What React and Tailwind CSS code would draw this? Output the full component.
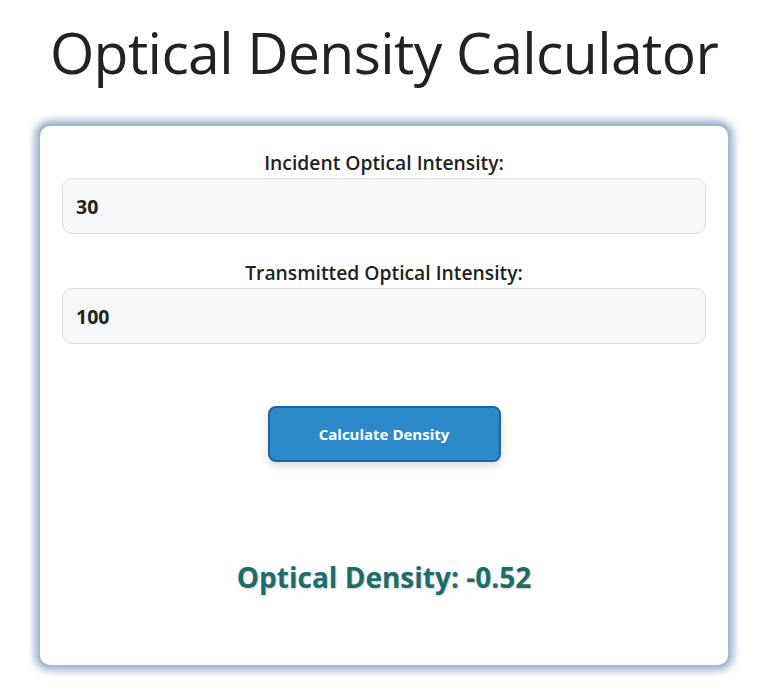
import React, { useState } from 'react';

const App = () => {
  const [incident, setIncident] = useState('30');
  const [transmitted, setTransmitted] = useState('100');
  const [density, setDensity] = useState(-0.52);

  const calculate = () => {
    const i0 = parseFloat(incident);
    const i = parseFloat(transmitted);
    if (i0 > 0 && i > 0) setDensity(Math.log10(i0 / i));
  };

  return (
    <div className="min-h-screen bg-white font-['Open_Sans','Noto_Sans',sans-serif] text-[#222]">
      <h1 className="pt-[12px] text-center text-[57px] font-normal leading-[80px] text-[#222] tracking-[-0.6px]">
        Optical Density Calculator
      </h1>

      <div className="mx-[38px] mt-[32px] h-[543px] rounded-[12px] border-2 border-[#a3b8cf] bg-white px-[22px] pt-[26px] shadow-[0_0_9px_3px_rgba(75,110,155,0.6)]">
        <div className="flex flex-col">
          <label className="text-center text-[19.3px] font-semibold leading-[22px]">
            Incident Optical Intensity:
          </label>
          <input
            value={incident}
            onChange={(e) => setIncident(e.target.value)}
            className="mt-[4px] h-[56px] w-full rounded-[10px] border border-[#dcdee2] bg-[#f6f7f9] px-[13px] text-[19.5px] font-bold outline-none"
          />

          <label className="mt-[28px] text-center text-[19.3px] font-semibold leading-[22px]">
            Transmitted Optical Intensity:
          </label>
          <input
            value={transmitted}
            onChange={(e) => setTransmitted(e.target.value)}
            className="mt-[4px] h-[56px] w-full rounded-[10px] border border-[#dcdee2] bg-[#f6f7f9] px-[13px] text-[19.5px] font-bold outline-none"
          />

          <div className="mt-[62px] flex justify-center">
            <button
              onClick={calculate}
              className="h-[56px] w-[233px] rounded-[8px] border-2 border-[#1e65a0] bg-[#2c8acb] text-[15px] font-bold text-white shadow-[0_4px_8px_rgba(0,0,0,0.15)]"
            >
              Calculate Density
            </button>
          </div>

          <p className="mt-[94px] text-center text-[28px] font-bold text-[#1b6d6d] [text-shadow:1px_1px_2px_rgba(0,0,0,0.2)]">
            Optical Density: {density.toFixed(2)}
          </p>
        </div>
      </div>
    </div>
  );
};

export default App;
